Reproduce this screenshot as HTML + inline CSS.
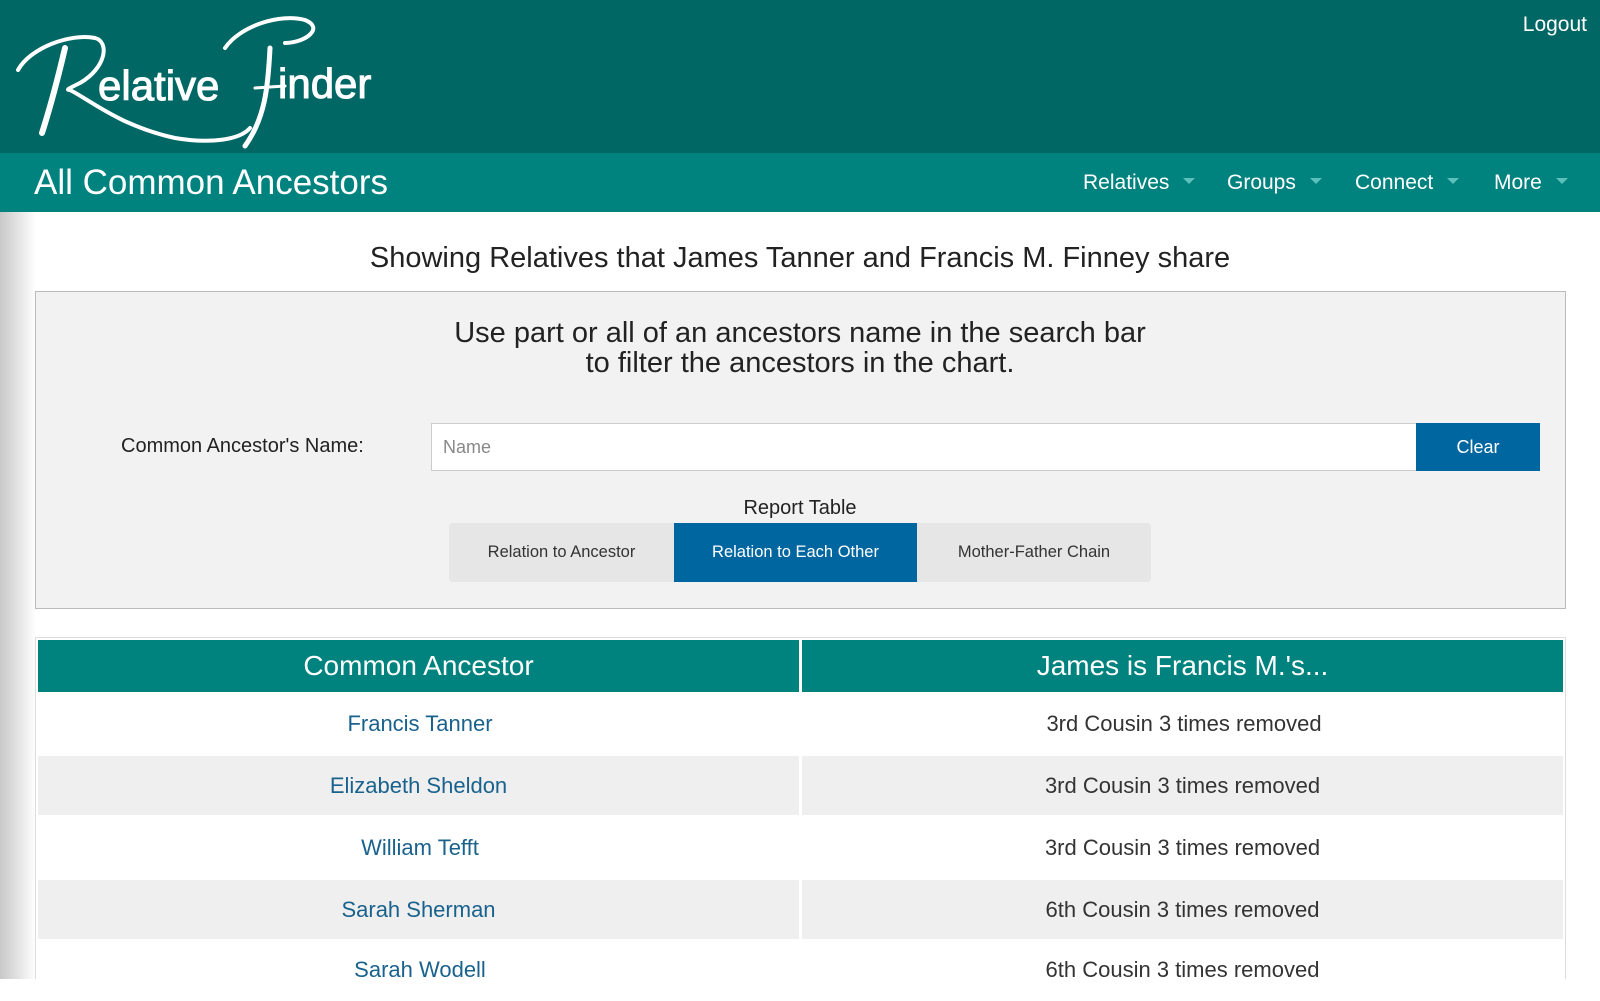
<!DOCTYPE html>
<html><head><meta charset="utf-8">
<style>
*{margin:0;padding:0;box-sizing:border-box}
body{width:1600px;height:979px;overflow:hidden;background:#fff;font-family:"Liberation Sans",sans-serif;position:relative}
.abs{position:absolute}
#top{left:0;top:0;width:1600px;height:153px;background:#006764}
#nav{left:0;top:153px;width:1600px;height:59px;background:#00827e}
#shadow{left:0;top:212px;width:36px;height:767px;background:linear-gradient(to right,#c8c8c8,#f4f4f4 80%,#fff)}
.navi{color:#fff;font-size:21px;top:171px}
.caret{display:inline-block;width:0;height:0;border-left:6px solid transparent;border-right:6px solid transparent;border-top:6px solid #5cc0bb;vertical-align:middle;margin-left:14px;margin-top:-4px}
.c{text-align:center}
#box{left:35px;top:291px;width:1531px;height:318px;background:#f2f2f2;border:1px solid #bbb}
.tab{top:523px;height:59px;line-height:59px;font-size:16.5px;text-align:center;color:#333;background:#e6e6e6}
#tbl{left:35px;top:637px;width:1531px;height:342px;border:1px solid #ddd;border-bottom:none;overflow:hidden}
.hd{top:640px;height:52px;line-height:52px;background:#00827e;color:#fff;font-size:28px;text-align:center}
.row{height:62px;line-height:62px;font-size:22px;text-align:center}
</style></head><body>
<div id="top" class="abs"></div>
<svg class="abs" style="left:10px;top:8px" width="390" height="145" viewBox="0 0 390 145">
<g fill="none" stroke="#fff" stroke-linecap="round">
<path d="M8 62 C20 40 60 25 85 30 C100 34 96 60 70 75 C60 80 55 82 60 82 C80 92 110 118 165 130 C200 136 230 132 240 120" stroke-width="4"/>
<path d="M55 40 C48 70 40 100 32 125" stroke-width="6"/>
<path d="M215 40 C230 18 270 5 295 12 C315 20 295 35 275 35" stroke-width="4"/>
<path d="M260 40 C258 80 255 110 235 138" stroke-width="5"/>
<path d="M245 80 L275 78" stroke-width="3"/>
</g>
<text x="88" y="92" fill="#fff" stroke="#fff" stroke-width="1" font-size="42" font-family="Liberation Sans, sans-serif">elative</text>
<text x="268" y="90" fill="#fff" stroke="#fff" stroke-width="1" font-size="42" font-family="Liberation Sans, sans-serif">inder</text>
</svg>
<div class="abs" style="right:13px;top:13px;color:#fff;font-size:21px">Logout</div>
<div id="nav" class="abs"></div>
<div class="abs" style="left:34px;top:163px;color:#fff;font-size:35px">All Common Ancestors</div>
<div class="abs navi" style="left:1083px">Relatives<span class="caret"></span></div>
<div class="abs navi" style="left:1227px">Groups<span class="caret"></span></div>
<div class="abs navi" style="left:1355px">Connect<span class="caret"></span></div>
<div class="abs navi" style="left:1494px">More<span class="caret"></span></div>
<div id="shadow" class="abs"></div>
<div class="abs c" style="left:0;width:1600px;top:242px;font-size:29px;color:#222">Showing Relatives that James Tanner and Francis M. Finney share</div>
<div id="box" class="abs"></div>
<div class="abs c" style="left:0;width:1600px;top:318px;font-size:29px;line-height:30px;color:#222">Use part or all of an ancestors name in the search bar<br>to filter the ancestors in the chart.</div>
<div class="abs" style="left:121px;top:435px;font-size:20px;color:#222">Common Ancestor's Name:</div>
<div class="abs" style="left:431px;top:423px;width:986px;height:48px;background:#fff;border:1px solid #ccc;padding-left:11px;line-height:46px;font-size:18px;color:#888">Name</div>
<div class="abs" style="left:1416px;top:423px;width:124px;height:48px;background:#0066a0;color:#fff;font-size:18px;line-height:48px;text-align:center">Clear</div>
<div class="abs c" style="left:0;width:1600px;top:497px;font-size:20px;color:#222">Report Table</div>
<div class="abs tab" style="left:449px;width:225px;border-radius:4px 0 0 4px">Relation to Ancestor</div>
<div class="abs tab" style="left:674px;width:243px;background:#0066a0;color:#fff">Relation to Each Other</div>
<div class="abs tab" style="left:917px;width:234px;border-radius:0 4px 4px 0">Mother-Father Chain</div>
<div id="tbl" class="abs"></div>
<div class="abs hd" style="left:38px;width:761px">Common Ancestor</div>
<div class="abs hd" style="left:802px;width:761px">James is Francis M.'s...</div>
<div class="abs" style="left:38px;top:692px;width:1525px">
<div class="row" style="background:#fff;display:flex;height:64px;line-height:64px"><div style="width:764px;color:#1a628e">Francis Tanner</div><div style="width:761px;color:#333;border-left:3px solid #fff">3rd Cousin 3 times removed</div></div>
<div class="row" style="background:#efefef;display:flex;height:59px;line-height:59px"><div style="width:761px;color:#1a628e">Elizabeth Sheldon</div><div style="width:764px;color:#333;border-left:3px solid #fff">3rd Cousin 3 times removed</div></div>
<div class="row" style="background:#fff;display:flex;height:65px;line-height:65px"><div style="width:764px;color:#1a628e">William Tefft</div><div style="width:761px;color:#333">3rd Cousin 3 times removed</div></div>
<div class="row" style="background:#efefef;display:flex;height:59px;line-height:59px"><div style="width:761px;color:#1a628e">Sarah Sherman</div><div style="width:764px;color:#333;border-left:3px solid #fff">6th Cousin 3 times removed</div></div>
<div class="row" style="background:#fff;display:flex"><div style="width:764px;color:#1a628e">Sarah Wodell</div><div style="width:761px;color:#333">6th Cousin 3 times removed</div></div>
</div>
</body></html>
